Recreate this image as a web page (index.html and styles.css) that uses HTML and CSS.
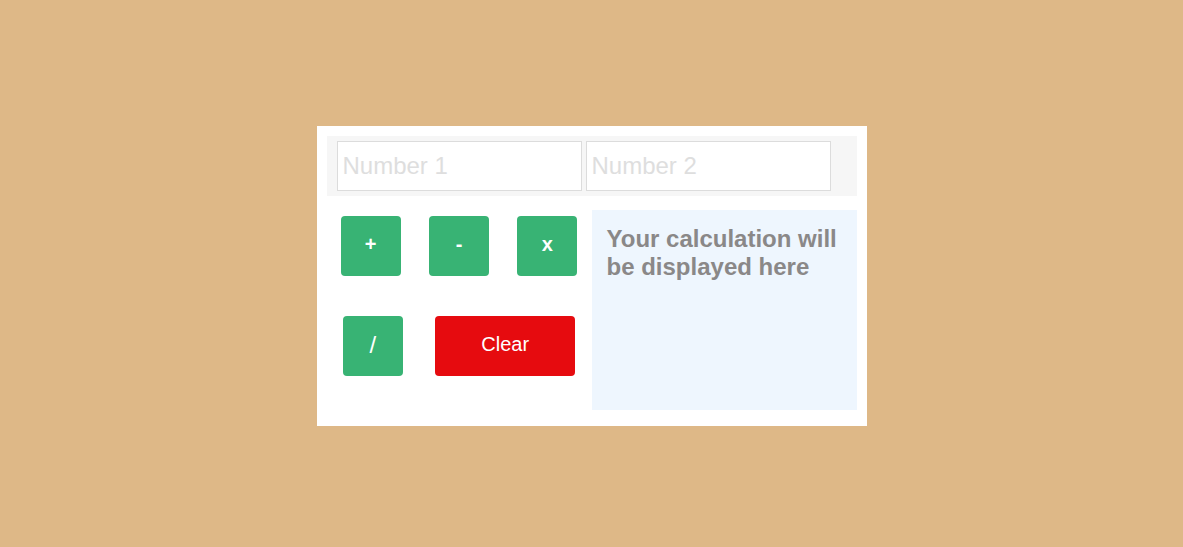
FILE: index.html
```html
<!DOCTYPE html>
<html>
<head>
<meta charset="utf-8">
<link rel="stylesheet" href="styles.css">
</head>
<body>
<div class="page">
  <div class="calc">
    <div class="inputs">
      <input class="num" type="text" placeholder="Number 1"><input class="num" type="text" placeholder="Number 2">
    </div>
    <div class="main">
      <div class="keys">
        <div class="row">
          <button class="btn op">+</button>
          <button class="btn op">-</button>
          <button class="btn op">x</button>
        </div>
        <div class="row">
          <button class="btn op thin">/</button>
          <button class="btn clear">Clear</button>
        </div>
      </div>
      <div class="result">Your calculation will be displayed here</div>
    </div>
  </div>
</div>
</body>
</html>
```

FILE: styles.css
```css
html, body {
  margin: 0;
  padding: 0;
  background: #deb887;
  font-family: "Liberation Sans", Arial, sans-serif;
}
.page {
  display: flex;
  justify-content: center;
  padding-top: 126px;
}
.calc {
  width: 550px;
  height: 300px;
  box-sizing: border-box;
  padding: 10px;
  background: #fff;
}
.inputs {
  height: 60px;
  box-sizing: border-box;
  padding: 5px 10px;
  background: #f6f6f6;
  display: flex;
  gap: 4px;
}
.num {
  width: 245px;
  height: 50px;
  box-sizing: border-box;
  margin: 0;
  border: 1px solid #dcdcdc;
  padding: 0 5px;
  font-family: "Liberation Sans", Arial, sans-serif;
  font-size: 24px;
  color: #333;
  background: #fff;
  outline: none;
}
.num::placeholder {
  color: #dedede;
}
.main {
  display: flex;
  margin-top: 14px;
  height: 200px;
}
.keys {
  width: 265px;
  display: flex;
  flex-direction: column;
  gap: 40px;
  padding-top: 6px;
  box-sizing: border-box;
}
.row {
  display: flex;
  justify-content: space-around;
}
.btn {
  height: 60px;
  box-sizing: border-box;
  border: none;
  border-radius: 4px;
  color: #fff;
  font-family: "Liberation Sans", Arial, sans-serif;
  font-size: 20px;
  padding: 0 0 3px 0;
  margin: 0;
}
.op {
  width: 60px;
  background: #38b374;
  font-weight: bold;
}
.op.thin {
  font-weight: normal;
  font-size: 24px;
  padding-bottom: 2px;
}
.clear {
  width: 140px;
  background: #e60b0f;
}
.result {
  width: 265px;
  height: 200px;
  box-sizing: border-box;
  padding: 15px;
  background: #eef6fe;
  color: #8a8888;
  font-size: 24px;
  font-weight: bold;
}
```
